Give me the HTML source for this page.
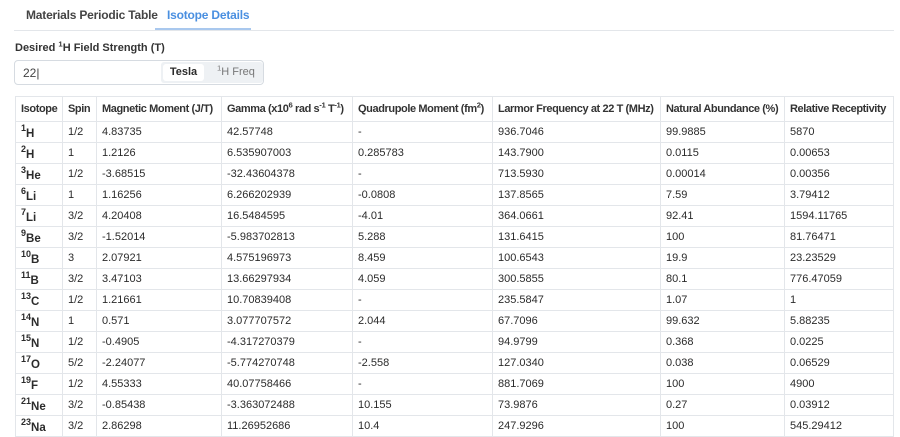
<!DOCTYPE html>
<html><head><style>
body{margin:0;background:#fff;font-family:"Liberation Sans",sans-serif;color:#2b2b2b;width:900px;height:426px;overflow:hidden;position:relative}
.tabs{position:absolute;left:14px;top:0;width:880px;height:30px;border-bottom:1px solid #e3e6ea}
.tab{position:absolute;top:8px;font-size:12px;font-weight:bold;letter-spacing:-0.2px}
.t1{left:12px;color:#444}
.t2{left:153px;color:#4a8fe0}
.ul{position:absolute;left:141px;top:28px;width:96px;height:2px;background:#a9c8ee}
.lbl{position:absolute;left:15px;top:42px;font-size:11px;font-weight:bold;color:#333}
sup{font-size:70%;line-height:0}
.inp{position:absolute;left:14px;top:60px;width:250px;height:25px;border:1px solid #d6dbe1;border-radius:4px;box-sizing:border-box}
.inp .v{position:absolute;left:8px;top:5px;font-size:12px;color:#444}
.grp{position:absolute;left:146px;top:1px;width:102px;height:21px;background:#eef1f4;border-radius:3px}
.btn{position:absolute;left:2px;top:2px;width:41px;height:17px;background:#fff;border-radius:3px;font-size:11px;font-weight:bold;text-align:center;line-height:17px}
.btn2{position:absolute;left:56px;top:2px;font-size:11px;color:#777;line-height:17px}
table{position:absolute;left:15px;top:96px;border-collapse:collapse;table-layout:fixed;width:878px;font-size:11px}
td,th{border:1px solid #e3e6ea;padding:0 0 0 5px;text-align:left;white-space:nowrap;overflow:hidden;height:20px}
th{height:24px;font-weight:bold;color:#333;font-size:11px;letter-spacing:-0.4px}
td.i{font-weight:bold;font-size:11.5px;padding-top:3px;height:17px}
td.i sup{font-size:9px;vertical-align:6px}
</style></head><body>
<div class="tabs"><div class="tab t1">Materials Periodic Table</div><div class="tab t2">Isotope Details</div><div class="ul"></div></div>
<div class="lbl">Desired <sup>1</sup>H Field Strength (T)</div>
<div class="inp"><span class="v">22|</span><div class="grp"><div class="btn">Tesla</div><div class="btn2"><sup>1</sup>H Freq</div></div></div>
<table>
<colgroup><col style="width:47px"><col style="width:34px"><col style="width:125px"><col style="width:131px"><col style="width:140px"><col style="width:168px"><col style="width:124px"><col style="width:109px"></colgroup>
<tr><th>Isotope</th><th>Spin</th><th>Magnetic Moment (J/T)</th><th>Gamma (x10<sup>6</sup> rad s<sup>-1</sup> T<sup>-1</sup>)</th><th>Quadrupole Moment (fm<sup>2</sup>)</th><th>Larmor Frequency at 22 T (MHz)</th><th>Natural Abundance (%)</th><th>Relative Receptivity</th></tr>
<tr><td class="i"><sup>1</sup>H</td><td>1/2</td><td>4.83735</td><td>42.57748</td><td>-</td><td>936.7046</td><td>99.9885</td><td>5870</td></tr>
<tr><td class="i"><sup>2</sup>H</td><td>1</td><td>1.2126</td><td>6.535907003</td><td>0.285783</td><td>143.7900</td><td>0.0115</td><td>0.00653</td></tr>
<tr><td class="i"><sup>3</sup>He</td><td>1/2</td><td>-3.68515</td><td>-32.43604378</td><td>-</td><td>713.5930</td><td>0.00014</td><td>0.00356</td></tr>
<tr><td class="i"><sup>6</sup>Li</td><td>1</td><td>1.16256</td><td>6.266202939</td><td>-0.0808</td><td>137.8565</td><td>7.59</td><td>3.79412</td></tr>
<tr><td class="i"><sup>7</sup>Li</td><td>3/2</td><td>4.20408</td><td>16.5484595</td><td>-4.01</td><td>364.0661</td><td>92.41</td><td>1594.11765</td></tr>
<tr><td class="i"><sup>9</sup>Be</td><td>3/2</td><td>-1.52014</td><td>-5.983702813</td><td>5.288</td><td>131.6415</td><td>100</td><td>81.76471</td></tr>
<tr><td class="i"><sup>10</sup>B</td><td>3</td><td>2.07921</td><td>4.575196973</td><td>8.459</td><td>100.6543</td><td>19.9</td><td>23.23529</td></tr>
<tr><td class="i"><sup>11</sup>B</td><td>3/2</td><td>3.47103</td><td>13.66297934</td><td>4.059</td><td>300.5855</td><td>80.1</td><td>776.47059</td></tr>
<tr><td class="i"><sup>13</sup>C</td><td>1/2</td><td>1.21661</td><td>10.70839408</td><td>-</td><td>235.5847</td><td>1.07</td><td>1</td></tr>
<tr><td class="i"><sup>14</sup>N</td><td>1</td><td>0.571</td><td>3.077707572</td><td>2.044</td><td>67.7096</td><td>99.632</td><td>5.88235</td></tr>
<tr><td class="i"><sup>15</sup>N</td><td>1/2</td><td>-0.4905</td><td>-4.317270379</td><td>-</td><td>94.9799</td><td>0.368</td><td>0.0225</td></tr>
<tr><td class="i"><sup>17</sup>O</td><td>5/2</td><td>-2.24077</td><td>-5.774270748</td><td>-2.558</td><td>127.0340</td><td>0.038</td><td>0.06529</td></tr>
<tr><td class="i"><sup>19</sup>F</td><td>1/2</td><td>4.55333</td><td>40.07758466</td><td>-</td><td>881.7069</td><td>100</td><td>4900</td></tr>
<tr><td class="i"><sup>21</sup>Ne</td><td>3/2</td><td>-0.85438</td><td>-3.363072488</td><td>10.155</td><td>73.9876</td><td>0.27</td><td>0.03912</td></tr>
<tr><td class="i"><sup>23</sup>Na</td><td>3/2</td><td>2.86298</td><td>11.26952686</td><td>10.4</td><td>247.9296</td><td>100</td><td>545.29412</td></tr>
</table>
</body></html>
